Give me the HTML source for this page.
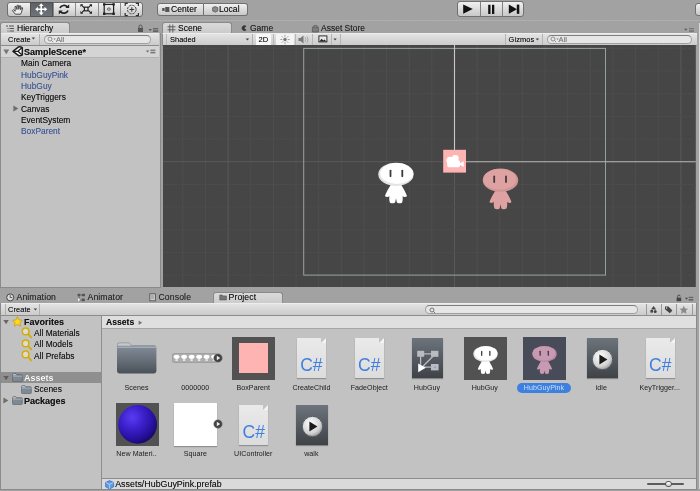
<!DOCTYPE html>
<html><head><meta charset="utf-8"><title>Unity</title>
<style>
*{box-sizing:border-box;margin:0;padding:0}
html,body{width:700px;height:491px;overflow:hidden;background:#a2a2a2}
body{font-family:"Liberation Sans",sans-serif;font-size:8.4px;color:#111;position:relative;-webkit-font-smoothing:antialiased}
.abs,div,span,svg{position:absolute}
.t{white-space:nowrap;line-height:12px;height:12px;text-shadow:0 0 .5px rgba(0,0,0,.45)}
.b{font-weight:bold;font-size:9px}
.blue{color:#3f5896;text-shadow:0 0 .5px rgba(63,88,150,.5)}
.btn{background:linear-gradient(#f0f0f0,#c8c8c8);border:1px solid #707070;}
.tab{background:linear-gradient(#dadada,#cbcbcb);border:1px solid #8a8a8a;border-bottom:none;border-radius:3px 3px 0 0}
.tbar{background:linear-gradient(#e3e3e3,#cbcbcb);border-top:1px solid #ededed;border-bottom:1px solid #8c8c8c}
.panel{background:#c2c2c2}
.search{background:#e6e6e6;border:1px solid #a0a0a0;border-top-color:#7e7e7e;border-radius:5px}
.lbl{font-size:7.1px;text-align:center;width:58px;line-height:10px;height:10px;letter-spacing:.05px;color:#1a1a1a}
.cs{background:linear-gradient(#eaeaea,#dcdcdc);box-shadow:0 1px 1px rgba(0,0,0,.25)}
.cs i{position:absolute;right:0;top:0;width:0;height:0;border-style:solid;border-width:0 0 5.500px 5.500px;border-color:transparent transparent #f4f4f4 #c2c2c2;}
.cs b{position:absolute;left:0;width:100%;text-align:center;top:17px;font-size:17.5px;line-height:20px;font-weight:normal;color:#3f7fdf}
.clip{background:linear-gradient(#6d747c,#50565c 60%,#3f4348);box-shadow:0 1px 1px rgba(0,0,0,.3)}
</style></head><body><div id="root" style="left:0;top:0;width:700px;height:491px;will-change:transform">

<div style="left:7px;top:1.5px;width:136px;height:15.5px;border-radius:3px;border:1px solid #6e6e6e;background:linear-gradient(#f2f2f2,#c8c8c8)"></div>
<div style="left:29.5px;top:1.5px;width:23.5px;height:15.5px;background:linear-gradient(#5c6168,#6e737a);border:1px solid #505050"></div>
<div style="left:53px;top:2.5px;width:1px;height:13.5px;background:#8a8a8a"></div>
<div style="left:75px;top:2.5px;width:1px;height:13.5px;background:#8a8a8a"></div>
<div style="left:97.5px;top:2.5px;width:1px;height:13.5px;background:#8a8a8a"></div>
<div style="left:120px;top:2.5px;width:1px;height:13.5px;background:#8a8a8a"></div>
<svg style="left:0;top:0" width="160" height="20" viewBox="0 0 160 20">
<g fill="none" stroke="#3a3a3a" stroke-width=".9">
<path d="M15.4 14.2 l-3-3.600 .9-.9 1.900 1.500 -.2-4.600 1.100-.3 .9 3.200 .1-4.200 1.200-.1 .5 4.100 .8-3.600 1.100.2 -.1 3.900 1.100-2.300 1 .4 -1.200 4.400 -.9 1.900 z" fill="#ececec"/>
</g>
<g fill="#fff" stroke="none">
<path d="M41.200 3.200 l2.400 2.700h-1.600v2.500h2.500v-1.600l2.700 2.400-2.700 2.400v-1.600h-2.500v2.500h1.600l-2.400 2.700-2.400-2.700h1.600v-2.500h-2.500v1.600l-2.700-2.400 2.700-2.400v1.600h2.500v-2.500h-1.600z"/>
</g>
<g fill="none" stroke="#222" stroke-width="1.700">
<path d="M60 8a4.200 3.400 0 0 1 7.400-1.200"/><path d="M68 10.600a4.200 3.400 0 0 1-7.400 1.200"/>
</g>
<path d="M69.200 4.200v3.800h-3.800z M58.800 14.400v-3.800h3.800z" fill="#222"/>
<g fill="none" stroke="#222" stroke-width="1.200">
<rect x="84.400" y="7.200" width="3.600" height="3.600"/>
<path d="M81.600 5.200l2.400 2.400M90.800 5.200l-2.400 2.400M81.600 12.800l2.400-2.400M90.800 12.800l-2.400-2.400"/>
</g>
<path d="M80.400 4.200h2.800l-2.800 2.800z M92 4.200h-2.800l2.800 2.800z M80.400 13.800h2.800l-2.800-2.800z M92 13.800h-2.800l2.800-2.800z" fill="#222"/>
<g fill="none" stroke="#222" stroke-width="1.200">
<rect x="104.200" y="4.400" width="9.400" height="9.400"/><ellipse cx="108.900" cy="9.100" rx="1.500" ry="1.200" stroke="#555" stroke-width=".9"/>
</g>
<path d="M103 3.200h2.400v2.400h-2.400z M112.400 3.200h2.400v2.400h-2.400z M103 12.600h2.400v2.400h-2.400z M112.400 12.600h2.400v2.400h-2.400z" fill="#222"/>
<g fill="none" stroke="#333" stroke-width="1.200">
<circle cx="131.800" cy="9.500" r="4.300" stroke-dasharray="2.400 1" stroke="#444" stroke-width="1"/>
<path d="M131.800 7.200v4.600M129.500 9.500h4.600" stroke-width="1"/>
<path d="M125.200 6v-2.600h2.600M138.400 6v-2.600h-2.600M125.200 13v2.600h2.600M138.400 13v2.600h-2.600"/>
</g>
</svg>
<div class="btn" style="left:157px;top:3px;width:46.5px;height:13px;border-radius:3px 0 0 3px"></div>
<div class="btn" style="left:203.500px;top:3px;width:44.300px;height:13px;border-radius:0 3px 3px 0;border-left:none"></div>
<svg style="left:160px;top:5px" width="60" height="10"><rect x="2.2" y="3" width="2.4" height="3" fill="#555"/><rect x="5.2" y="2" width="4.2" height="5" fill="#555"/><path d="M55.2 1.600l2.600 1v3.400l-2.600 1.200-2.600-1.200v-3.400z" fill="#8a8a8a" stroke="#555" stroke-width=".7"/></svg>
<span class="t" style="left:171px;top:4px;font-size:8.6px;line-height:11px">Center</span>
<span class="t" style="left:219px;top:4px;font-size:8.6px;line-height:11px">Local</span>
<div class="btn" style="left:457.3px;top:1.4px;width:67.2px;height:15.6px;border-radius:3px"></div>
<div style="left:479.8px;top:2.4px;width:1px;height:13.6px;background:#808080"></div><div style="left:502.3px;top:2.4px;width:1px;height:13.6px;background:#808080"></div>
<svg style="left:457px;top:1.4px" width="68" height="16"><path d="M6.2 3.4l9.6 4.700-9.600 4.700z" fill="#111"/><rect x="31.200" y="3.800" width="2.300" height="9.200" fill="#111"/><rect x="35" y="3.800" width="2.300" height="9.200" fill="#111"/><path d="M51.800 3.600l8.200 4.600-8.200 4.600z" fill="#111"/><rect x="59.800" y="3.600" width="2.500" height="9.200" fill="#111"/></svg>
<div class="btn" style="left:695px;top:3px;width:10px;height:13px;border-radius:3px"></div>
<div style="left:0;top:20px;width:700px;height:1px;background:repeating-linear-gradient(90deg,#b2b2b2 0 2px,#a8a8a8 2px 3px)"></div>
<div class="panel" style="left:0px;top:33px;width:160.600px;height:255px;border:1px solid #8a8a8a;border-top:none"></div>
<div class="tab" style="left:0px;top:22px;width:69.800px;height:11.300px"></div>
<svg style="left:5px;top:24px" width="10" height="9"><path d="M1 2h2M4 2h5M2.5 4.5h1M4.5 4.5h4.5M2.5 7h1M4.5 7h4.5" stroke="#555" stroke-width="1"/></svg>
<span class="t" style="left:17px;top:21.900px;font-size:8.500px">Hierarchy</span>
<svg style="left:136px;top:24px" width="26" height="10"><rect x="2" y="4" width="5" height="4" fill="#555"/><path d="M3 4v-1.5a1.5 1.5 0 0 1 3 0v1.5" fill="none" stroke="#555" stroke-width="1"/><path d="M12.5 5h3.4l-1.7 2z" fill="#555"/><rect x="17" y="4" width="5.2" height="1.4" fill="#666"/><rect x="17" y="6.2" width="5.2" height="1.8" fill="#666"/></svg>
<div class="tbar" style="left:1px;top:33px;width:158px;height:12.500px"></div>
<span class="t" style="left:8px;top:33.5px;font-size:7.4px;letter-spacing:.1px">Create</span>
<svg style="left:31px;top:37px" width="6" height="4"><path d="M.7 .6h3.400l-1.700 2z" fill="#444"/></svg>
<div style="left:38.5px;top:34px;width:1px;height:11px;background:#b0b0b0"></div>
<div class="search" style="left:44px;top:34.5px;width:107px;height:9.5px"></div>
<svg style="left:47px;top:36px" width="10" height="8"><circle cx="3" cy="3" r="2" fill="none" stroke="#888" stroke-width=".9"/><path d="M4.5 4.5l1.6 1.6" stroke="#888" stroke-width=".9"/><path d="M6.4 2.6h2.4l-1.2 1.4z" fill="#888"/></svg>
<span class="t" style="left:56px;top:33.5px;font-size:7.6px;color:#8e8e8e">All</span>
<div style="left:1px;top:45.500px;width:158px;height:12.800px;background:#d4d4d4;border-bottom:1px solid #b4b4b4"></div>
<svg style="left:2.5px;top:48.5px" width="8" height="8"><path d="M.4 .6h5.800l-2.900 5z" fill="#777"/></svg>
<svg style="left:11.500px;top:45.500px" width="12" height="11"><path d="M1 5.300 L6.600 .9 Q8.800 .6 10.300 1.600 L10.300 9 Q8.800 10 6.600 9.700 Z" fill="#fff" stroke="#1c1c1c" stroke-width="1.500" stroke-linejoin="round"/><path d="M1.200 5.300H6M6 5.300L9.800 1.800M6 5.300L9.800 8.800" stroke="#1c1c1c" stroke-width="1.300" fill="none"/></svg>
<span class="t b" style="left:24px;top:45.5px">SampleScene*</span>
<svg style="left:145px;top:49px" width="14" height="6"><path d="M1 1.4h3.2l-1.6 2z" fill="#666"/><rect x="5.4" y=".6" width="5" height="1.3" fill="#777"/><rect x="5.4" y="2.8" width="5" height="1.6" fill="#777"/></svg>
<span class="t" style="left:21px;top:57.2px">Main Camera</span>
<span class="t blue" style="left:21px;top:68.6px">HubGuyPink</span>
<span class="t blue" style="left:21px;top:79.9px">HubGuy</span>
<span class="t" style="left:21px;top:91.3px">KeyTriggers</span>
<span class="t" style="left:21px;top:102.6px">Canvas</span>
<svg style="left:13.200px;top:105.2px" width="7" height="8"><path d="M.4 .4v6.200l5-3.100z" fill="#6e6e6e"/></svg>
<span class="t" style="left:21px;top:114.0px">EventSystem</span>
<span class="t blue" style="left:21px;top:125.4px">BoxParent</span>
<div class="tab" style="left:162px;top:22.300px;width:69.500px;height:11px"></div>
<svg style="left:167px;top:24px" width="9" height="9"><path d="M2.8 .5v8M5.8 .5v8M.5 2.8h8M.5 5.8h8" stroke="#555" stroke-width=".9"/></svg>
<span class="t" style="left:178px;top:21.900px;font-size:8.500px">Scene</span>
<svg style="left:240.500px;top:24.800px" width="7" height="7"><path d="M5.400 1.200A2.700 2.700 0 1 0 5.400 5L3.200 3.100z" fill="#333"/></svg>
<span class="t" style="left:250px;top:21.900px;font-size:8.500px;color:#222">Game</span>
<svg style="left:311px;top:24px" width="9" height="9"><path d="M1.4 3.2h6v4.800h-6z" fill="#7c7c7c" stroke="#555" stroke-width=".7"/><path d="M2.8 3.2v-1.500h3.200v1.500" fill="none" stroke="#555" stroke-width=".8"/></svg>
<span class="t" style="left:321px;top:21.900px;font-size:8.500px;color:#222">Asset Store</span>
<svg style="left:683px;top:27px" width="14" height="6"><path d="M1.2 1.8h3.2l-1.6 2z" fill="#555"/><rect x="6" y="1" width="5" height="1.3" fill="#777"/><rect x="6" y="3.2" width="5" height="1.7" fill="#777"/></svg>
<div class="tbar" style="left:162px;top:33px;width:534.500px;height:12.500px;border-left:1px solid #8a8a8a"></div><div style="left:166px;top:34px;width:1px;height:11px;background:#b8b8b8"></div>
<span class="t" style="left:170px;top:33.500px;font-size:7.400px;letter-spacing:.05px">Shaded</span>
<svg style="left:245px;top:37.5px" width="6" height="4"><path d="M.7 .6h3.400l-1.700 2z" fill="#444"/></svg>
<div style="left:252px;top:34px;width:1px;height:11px;background:#b0b0b0"></div><div style="left:273.300px;top:34px;width:1px;height:11px;background:#b8b8b8"></div><div style="left:295.300px;top:34px;width:1px;height:11px;background:#b8b8b8"></div>
<div style="left:255.700px;top:33.600px;width:15.500px;height:11.200px;background:#f7f7f7"></div>
<span class="t" style="left:258.5px;top:33.5px;font-size:7.6px">2D</span>
<div style="left:276.300px;top:33.600px;width:17.400px;height:11.200px;background:#f4f4f4"></div>
<svg style="left:279px;top:34px" width="12" height="11"><circle cx="6" cy="5.5" r="1.7" fill="#777"/><path d="M6 .8v2M6 8.2v2M1.3 5.5h2M8.7 5.5h2M2.7 2.2l1.4 1.4M7.9 7.4l1.4 1.4M9.3 2.2l-1.4 1.4M4.1 7.4l-1.4 1.4" stroke="#888" stroke-width=".8"/></svg>
<svg style="left:297px;top:34px" width="14" height="11"><path d="M1.5 4h2l3-2.6v8.2l-3-2.6h-2z" fill="#777"/><path d="M8 3.4a3 3 0 0 1 0 4.2M9.6 2a5 5 0 0 1 0 7" fill="none" stroke="#999" stroke-width=".8"/></svg>
<div style="left:312.300px;top:34px;width:1px;height:11px;background:#b4b4b4"></div>
<svg style="left:317.500px;top:35.300px" width="11" height="9"><rect x=".9" y=".9" width="8" height="6" fill="#e8e8e8" stroke="#333" stroke-width="1"/><path d="M1.400 6.400l2.200-2.600 1.700 1.700 1.200-1 1.800 1.900z" fill="#222"/></svg>
<div style="left:330.5px;top:34px;width:1px;height:11px;background:#b4b4b4"></div>
<svg style="left:333.3px;top:38px" width="6" height="4"><path d="M.5 .5h3.2l-1.6 2z" fill="#444"/></svg>
<div style="left:339.500px;top:34px;width:1px;height:11px;background:#b4b4b4"></div>
<div style="left:504.5px;top:34px;width:1px;height:11px;background:#b4b4b4"></div>
<span class="t" style="left:508.5px;top:33.5px;font-size:7.4px;letter-spacing:.15px">Gizmos</span>
<svg style="left:535px;top:37.5px" width="6" height="4"><path d="M.7 .6h3.400l-1.700 2z" fill="#444"/></svg>
<div style="left:541.5px;top:34px;width:1px;height:11px;background:#b4b4b4"></div>
<div class="search" style="left:546.5px;top:34.5px;width:145px;height:9.5px"></div>
<svg style="left:549.5px;top:36px" width="10" height="8"><circle cx="3" cy="3" r="2" fill="none" stroke="#888" stroke-width=".9"/><path d="M4.5 4.5l1.6 1.6" stroke="#888" stroke-width=".9"/><path d="M6.4 2.6h2.4l-1.2 1.4z" fill="#888"/></svg>
<span class="t" style="left:558.5px;top:33.5px;font-size:7.6px;color:#8e8e8e">All</span>
<svg style="left:163px;top:45px" width="532.8" height="242.3" viewBox="163 45 532.8 242.3"><rect x="163" y="45" width="532.8" height="242.3" fill="#464646"/><path d="M182.82 45V287.3" stroke="#4e4e4e" stroke-width="1"/><path d="M205.46 45V287.3" stroke="#4e4e4e" stroke-width="1"/><path d="M228.10 45V287.3" stroke="#5a5a5a" stroke-width="1"/><path d="M250.74 45V287.3" stroke="#4e4e4e" stroke-width="1"/><path d="M273.38 45V287.3" stroke="#4e4e4e" stroke-width="1"/><path d="M296.02 45V287.3" stroke="#4e4e4e" stroke-width="1"/><path d="M318.66 45V287.3" stroke="#4e4e4e" stroke-width="1"/><path d="M341.30 45V287.3" stroke="#4e4e4e" stroke-width="1"/><path d="M363.94 45V287.3" stroke="#4e4e4e" stroke-width="1"/><path d="M386.58 45V287.3" stroke="#4e4e4e" stroke-width="1"/><path d="M409.22 45V287.3" stroke="#4e4e4e" stroke-width="1"/><path d="M431.86 45V287.3" stroke="#4e4e4e" stroke-width="1"/><path d="M454.50 45V287.3" stroke="#5a5a5a" stroke-width="1"/><path d="M477.14 45V287.3" stroke="#4e4e4e" stroke-width="1"/><path d="M499.78 45V287.3" stroke="#4e4e4e" stroke-width="1"/><path d="M522.42 45V287.3" stroke="#4e4e4e" stroke-width="1"/><path d="M545.06 45V287.3" stroke="#4e4e4e" stroke-width="1"/><path d="M567.70 45V287.3" stroke="#4e4e4e" stroke-width="1"/><path d="M590.34 45V287.3" stroke="#4e4e4e" stroke-width="1"/><path d="M612.98 45V287.3" stroke="#4e4e4e" stroke-width="1"/><path d="M635.62 45V287.3" stroke="#4e4e4e" stroke-width="1"/><path d="M658.26 45V287.3" stroke="#4e4e4e" stroke-width="1"/><path d="M680.90 45V287.3" stroke="#5a5a5a" stroke-width="1"/><path d="M163 48.30H695.8" stroke="#4e4e4e" stroke-width="1" stroke-dasharray="2.200 .8"/><path d="M163 70.98H695.8" stroke="#4e4e4e" stroke-width="1" stroke-dasharray="2.200 .8"/><path d="M163 93.66H695.8" stroke="#4e4e4e" stroke-width="1" stroke-dasharray="2.200 .8"/><path d="M163 116.34H695.8" stroke="#4e4e4e" stroke-width="1" stroke-dasharray="2.200 .8"/><path d="M163 139.02H695.8" stroke="#4e4e4e" stroke-width="1" stroke-dasharray="2.200 .8"/><path d="M163 161.70H695.8" stroke="#5a5a5a" stroke-width="1"/><path d="M163 184.38H695.8" stroke="#4e4e4e" stroke-width="1" stroke-dasharray="2.200 .8"/><path d="M163 207.06H695.8" stroke="#4e4e4e" stroke-width="1" stroke-dasharray="2.200 .8"/><path d="M163 229.74H695.8" stroke="#4e4e4e" stroke-width="1" stroke-dasharray="2.200 .8"/><path d="M163 252.42H695.8" stroke="#4e4e4e" stroke-width="1" stroke-dasharray="2.200 .8"/><path d="M163 275.10H695.8" stroke="#4e4e4e" stroke-width="1" stroke-dasharray="2.200 .8"/><rect x="303.700" y="48.400" width="301.800" height="226.700" fill="none" stroke="#97a1a4" stroke-width="1"/><path d="M454.5 45V150" stroke="#c9c9c9" stroke-width="1.1"/><path d="M466 161.7H695.8" stroke="#b4b4b4" stroke-width="1.1"/><rect x="443.2" y="149.8" width="22.8" height="22.8" fill="#ffb4b4"/><path d="M454.5 150v4" stroke="#d8c0c0" stroke-width="1"/><g fill="#fff"><circle cx="450" cy="160.3" r="3.6"/><circle cx="455.3" cy="158.3" r="3.4"/><rect x="447.2" y="160.2" width="12.8" height="7" rx="1.6"/><path d="M459.6 163.6l4.2-2.4v5.8l-4.2-2.2z"/></g><g transform="translate(396 174.3) scale(1.0 1.0)"><path d="M-4.6 9.5 C-6 12 -10.5 19 -11 22 C-9 23.4 -7.6 22.6 -6.6 21.6 C-7 24 -6.6 27 -6 28.4 C-4 29.4 -1.6 29 -0.8 28 L0 24 L0.8 28 C1.6 29 4 29.4 6 28.4 C6.6 27 7 24 6.6 21.6 C7.6 22.6 9 23.4 11 22 C10.5 19 6 12 4.6 9.5 Z" fill="#ffffff"/><ellipse cx="0" cy="0" rx="17.7" ry="11.6" fill="#e4e4e4"/><ellipse cx="0.8" cy="-0.8" rx="16.4" ry="10.4" fill="#ffffff"/><rect x="-6.400" y="-4.600" width="1.800" height="7.400" rx=".9" fill="#3a3a3a"/><rect x="5.4" y="-4.6" width="1.8" height="7.4" rx=".9" fill="#3a3a3a"/></g><g transform="translate(500.5 180.2) scale(-1.0 1.0)"><path d="M-4.6 9.5 C-6 12 -10.5 19 -11 22 C-9 23.4 -7.6 22.6 -6.6 21.6 C-7 24 -6.6 27 -6 28.4 C-4 29.4 -1.6 29 -0.8 28 L0 24 L0.8 28 C1.6 29 4 29.4 6 28.4 C6.6 27 7 24 6.6 21.6 C7.6 22.6 9 23.4 11 22 C10.5 19 6 12 4.6 9.5 Z" fill="#dfa2a2"/><ellipse cx="0" cy="0" rx="17.7" ry="11.6" fill="#cf9494"/><ellipse cx="0.8" cy="-0.8" rx="16.4" ry="10.4" fill="#dfa2a2"/><rect x="-6.400" y="-4.600" width="1.800" height="7.400" rx=".9" fill="#4a3838"/><rect x="5.4" y="-4.6" width="1.8" height="7.4" rx=".9" fill="#4a3838"/></g></svg>
<div style="left:698.7px;top:23px;width:2px;height:466px;background:#dadada"></div>
<div class="panel" style="left:0px;top:303px;width:697px;height:186.500px;border:1px solid #8a8a8a;border-top:none"></div>
<svg style="left:5.5px;top:292.5px" width="9" height="9"><circle cx="4.2" cy="4.4" r="3.5" fill="#ddd" stroke="#444" stroke-width="1"/><path d="M4.2 2.2v2.4h2" fill="none" stroke="#444" stroke-width=".9"/></svg>
<span class="t" style="left:16.5px;top:291px;font-size:8.700px;letter-spacing:.1px;color:#2a2a2a">Animation</span>
<svg style="left:77px;top:292.5px" width="9" height="9"><rect x=".6" y=".8" width="2.6" height="2.4" fill="#555"/><rect x="5" y=".8" width="3" height="2.4" fill="#555"/><rect x="4.6" y="5.6" width="3.2" height="2.6" fill="#555"/><path d="M2 3v4l2.4 0M3 2h2" stroke="#555" stroke-width=".8" fill="none"/><path d="M1 5l2.4 1.8-2.4 1.6z" fill="#eee"/></svg>
<span class="t" style="left:87.5px;top:291px;font-size:8.700px;letter-spacing:.1px;color:#2a2a2a">Animator</span>
<svg style="left:149px;top:292.5px" width="8" height="9"><rect x=".8" y=".8" width="5.6" height="7" fill="#ccc" stroke="#555" stroke-width=".9"/><path d="M2 3h3M2 5h3" stroke="#777" stroke-width=".7"/></svg>
<span class="t" style="left:158.5px;top:291px;font-size:8.700px;letter-spacing:.1px;color:#2a2a2a">Console</span>
<div class="tab" style="left:213px;top:291.5px;width:69.5px;height:12px"></div>
<svg style="left:219px;top:293.500px" width="8" height="7" viewBox="0 0 9 8"><path d="M.8 1.2h2.800l.8 1h4v4.600h-7.600z" fill="#777" stroke="#555" stroke-width=".7"/></svg>
<span class="t" style="left:228.5px;top:291px;font-size:8.700px;letter-spacing:.1px">Project</span>
<svg style="left:675px;top:294px" width="22" height="9"><rect x="1.6" y="3.6" width="4.6" height="3.6" fill="#444"/><path d="M2.6 3.6v-1.2a1.3 1.3 0 0 1 2.6 0" fill="none" stroke="#444" stroke-width=".9"/><path d="M10 3.8h3l-1.5 1.9z" fill="#444"/><rect x="13.6" y="2.8" width="4.6" height="1.3" fill="#666"/><rect x="13.6" y="5" width="4.6" height="1.7" fill="#666"/></svg>
<div class="tbar" style="left:1px;top:303px;width:695px;height:13px"></div>
<div style="left:4.5px;top:304px;width:1px;height:11px;background:#b0b0b0"></div>
<span class="t" style="left:8px;top:303.8px;font-size:7.4px;letter-spacing:.1px">Create</span>
<svg style="left:32.5px;top:307.5px" width="6" height="4"><path d="M.7 .6h3.400l-1.700 2z" fill="#444"/></svg>
<div style="left:39px;top:304px;width:1px;height:11px;background:#b0b0b0"></div>
<div class="search" style="left:425px;top:304.8px;width:213px;height:9.5px"></div>
<svg style="left:428.5px;top:306.5px" width="8" height="8"><circle cx="3" cy="3" r="2" fill="none" stroke="#666" stroke-width=".9"/><path d="M4.5 4.5l1.6 1.6" stroke="#666" stroke-width=".9"/></svg>
<div style="left:646px;top:304px;width:1px;height:11px;background:#9a9a9a"></div>
<div style="left:661px;top:304px;width:1px;height:11px;background:#9a9a9a"></div>
<div style="left:676.3px;top:304px;width:1px;height:11px;background:#9a9a9a"></div>
<div style="left:692px;top:304px;width:1px;height:11px;background:#9a9a9a"></div>
<svg style="left:646px;top:304px" width="46" height="11"><g fill="#444"><path d="M7.6 2l2.6 3.6h-5.2z"/><rect x="4.4" y="6" width="2.6" height="2.6"/><circle cx="9.2" cy="7.4" r="1.5"/></g><path d="M19 2.4h3.4l4 4-2.6 2.8-4.8-4z" fill="#444"/><circle cx="20.6" cy="4" r=".7" fill="#ddd"/><path d="M37.8 1.8l1.3 2.6 2.9.4-2.1 2 .5 2.9-2.6-1.4-2.6 1.4.5-2.9-2.1-2 2.9-.4z" fill="#8a8a8a"/></svg>
<div style="left:100.5px;top:316px;width:1px;height:173px;background:#8e8e8e"></div>
<div style="left:1px;top:372.200px;width:99.500px;height:10.800px;background:#8f8f8f"></div>
<svg style="left:2.5px;top:318.6px" width="7" height="7"><path d="M.4 1h5.4l-2.7 4.2z" fill="#666"/></svg>
<svg style="left:12.300px;top:316.200px" width="11" height="11" viewBox="0 0 12 12"><path d="M6 .8l1.6 3.5 3.8.4-2.8 2.6.8 3.8L6 9.2 2.6 11.1l.8-3.8L.6 4.700l3.800-.4z" fill="#ffd820" stroke="#c79a0a" stroke-width=".8"/></svg>
<span class="t b" style="left:24px;top:315.5px">Favorites</span>
<svg style="left:21px;top:327.2px" width="12" height="12"><circle cx="4.600" cy="4.400" r="3.300" fill="#dcdcd4" stroke="#d4ae08" stroke-width="1.500"/><path d="M7.200 7.200l3 3.200" stroke="#d4ae08" stroke-width="1.900" stroke-linecap="round"/></svg>
<span class="t" style="left:34px;top:327.0px">All Materials</span>
<svg style="left:21px;top:338.65px" width="12" height="12"><circle cx="4.600" cy="4.400" r="3.300" fill="#dcdcd4" stroke="#d4ae08" stroke-width="1.500"/><path d="M7.200 7.200l3 3.200" stroke="#d4ae08" stroke-width="1.900" stroke-linecap="round"/></svg>
<span class="t" style="left:34px;top:338.4px">All Models</span>
<svg style="left:21px;top:350.09999999999997px" width="12" height="12"><circle cx="4.600" cy="4.400" r="3.300" fill="#dcdcd4" stroke="#d4ae08" stroke-width="1.500"/><path d="M7.200 7.200l3 3.200" stroke="#d4ae08" stroke-width="1.900" stroke-linecap="round"/></svg>
<span class="t" style="left:34px;top:349.9px">All Prefabs</span>
<svg style="left:2.5px;top:374.8px" width="7" height="7"><path d="M.4 1h5.4l-2.7 4.2z" fill="#5e5e5e"/></svg>
<svg style="left:11.5px;top:373.2px" width="11" height="9"><path d="M.5 1.6q0-.9.9-.9h2.6l.9 1h4.6q.8 0 .8.8v5.3q0 .7-.8.7h-8.2q-.8 0-.8-.7z" fill="#7f8993" stroke="#565c64" stroke-width=".6"/><path d="M.9 1.300h2.800l.8 1h-3.600z" fill="#c9ced3"/><path d="M.8 3.200h9.600" stroke="#b6bec6" stroke-width=".7"/></svg>
<span class="t b" style="left:24px;top:371.6px;color:#fff">Assets</span>
<svg style="left:20.8px;top:384.8px" width="11" height="9"><path d="M.5 1.6q0-.9.9-.9h2.6l.9 1h4.6q.8 0 .8.8v5.3q0 .7-.8.7h-8.2q-.8 0-.8-.7z" fill="#7f8993" stroke="#565c64" stroke-width=".6"/><path d="M.9 1.300h2.800l.8 1h-3.600z" fill="#c9ced3"/><path d="M.8 3.200h9.600" stroke="#b6bec6" stroke-width=".7"/></svg>
<span class="t" style="left:34px;top:383.4px">Scenes</span>
<svg style="left:3.2px;top:397.3px" width="7" height="8"><path d="M.4 .4v6.200l5-3.100z" fill="#6e6e6e"/></svg>
<svg style="left:11.5px;top:396.2px" width="11" height="9"><path d="M.5 1.6q0-.9.9-.9h2.6l.9 1h4.6q.8 0 .8.8v5.3q0 .7-.8.7h-8.2q-.8 0-.8-.7z" fill="#7f8993" stroke="#565c64" stroke-width=".6"/><path d="M.9 1.300h2.800l.8 1h-3.600z" fill="#c9ced3"/><path d="M.8 3.200h9.600" stroke="#b6bec6" stroke-width=".7"/></svg>
<span class="t b" style="left:24px;top:394.8px">Packages</span>
<div style="left:101.500px;top:316.400px;width:594.500px;height:12.300px;background:#dfdfdf;border-bottom:1px solid #a6a6a6"></div>
<span class="t b" style="left:106px;top:316.200px;font-size:8.600px">Assets</span>
<svg style="left:137.500px;top:320.100px" width="6" height="6"><path d="M.6 .6v4.400l3.600-2.200z" fill="#777"/></svg>
<svg style="left:116px;top:341px" width="42" height="35" viewBox="0 0 42 35"><defs><linearGradient id="fg" x1="0" y1="0" x2="0" y2="1"><stop offset="0" stop-color="#8a949e"/><stop offset=".5" stop-color="#6b747e"/><stop offset="1" stop-color="#4a5058"/></linearGradient></defs>
<path d="M1 4q0-2.400 2.400-2.400h9.600l2.600 2.600h22.400q2.400 0 2.400 2.400v23.400q0 2.400-2.400 2.400h-34.600q-2.400 0-2.400-2.400z" fill="url(#fg)"/><path d="M1.600 4q0-1.800 1.800-1.800h9.400l2.600 2.600h-13.800z" fill="#c8c8c8"/><path d="M1.400 6.200h39" stroke="#b4bcc4" stroke-width="1"/></svg>
<span class="lbl" style="left:107.5px;top:382.8px">Scenes</span>
<div style="left:172.3px;top:353.4px;width:45px;height:9.4px;background:#adadad;border:1px solid #a0a0a0;border-radius:1.5px"></div>
<svg style="left:172.3px;top:353.4px" width="46" height="10"><ellipse cx="4.6" cy="3.8" rx="2.9" ry="2.1" fill="#fff"/><rect x="3.4" y="6.3" width="2.4" height="1.5" fill="#f4f4f4"/><ellipse cx="12.1" cy="3.8" rx="2.9" ry="2.1" fill="#fff"/><rect x="10.9" y="6.3" width="2.4" height="1.5" fill="#f4f4f4"/><ellipse cx="19.6" cy="3.8" rx="2.9" ry="2.1" fill="#fff"/><rect x="18.4" y="6.3" width="2.4" height="1.5" fill="#f4f4f4"/><ellipse cx="27.1" cy="3.8" rx="2.9" ry="2.1" fill="#fff"/><rect x="25.9" y="6.3" width="2.4" height="1.5" fill="#f4f4f4"/><ellipse cx="34.6" cy="3.8" rx="2.9" ry="2.1" fill="#fff"/><rect x="33.4" y="6.3" width="2.4" height="1.5" fill="#f4f4f4"/><ellipse cx="42.1" cy="3.8" rx="2.9" ry="2.1" fill="#fff"/><rect x="40.9" y="6.3" width="2.4" height="1.5" fill="#f4f4f4"/></svg>
<svg style="left:213px;top:353px" width="10" height="10"><circle cx="5" cy="5" r="4.300" fill="#424242" stroke="#8a8a8a" stroke-width=".5"/><path d="M3.800 2.800l3.400 2.200-3.400 2.200z" fill="#eee"/></svg>
<span class="lbl" style="left:166.3px;top:382.8px">0000000</span>
<div style="left:232.4px;top:336.5px;width:42.6px;height:43.5px;background:#525252"></div>
<div style="left:238.9px;top:343.4px;width:29.6px;height:29.6px;background:#ffb4b4"></div>
<span class="lbl" style="left:224.3px;top:382.8px">BoxParent</span>
<div class="cs" style="left:296.79999999999995px;top:338px;width:29.2px;height:40px"><i></i><b>C#</b></div>
<span class="lbl" style="left:282.4px;top:382.8px">CreateChild</span>
<div class="cs" style="left:354.7px;top:338px;width:29.2px;height:40px"><i></i><b>C#</b></div>
<span class="lbl" style="left:340.3px;top:382.8px">FadeObject</span>
<div class="clip" style="left:411.8px;top:337.8px;width:31.6px;height:40.2px"></div>
<svg style="left:411.8px;top:337.8px" width="32" height="41"><g fill="#b9bcc0"><rect x="5.200" y="12.800" width="7" height="6"/><rect x="19" y="12.800" width="7.400" height="6"/><rect x="19" y="26" width="7.600" height="6.400"/></g><path d="M12 15.800h7M8.600 18.800v8M10 29.200l12-12M12 29.200h7" stroke="#b9bcc0" stroke-width="1.300" fill="none"/><path d="M6.200 25.600l7.600 4.200-7.600 4.400z" fill="#fff"/><circle cx="23" cy="29.200" r=".7" fill="#5a8adf"/></svg>
<span class="lbl" style="left:398px;top:382.8px">HubGuy</span>
<div style="left:464.3px;top:336.6px;width:42.8px;height:43px;background:#525252"></div>
<svg style="left:464.3px;top:336.600px" width="43" height="43" viewBox="464.3 336.6 43 43"><g transform="translate(485.8 353.6) scale(0.69 0.69)"><path d="M-4.6 9.5 C-6 12 -10.5 19 -11 22 C-9 23.4 -7.6 22.6 -6.6 21.6 C-7 24 -6.6 27 -6 28.4 C-4 29.4 -1.6 29 -0.8 28 L0 24 L0.8 28 C1.6 29 4 29.4 6 28.4 C6.6 27 7 24 6.6 21.6 C7.6 22.6 9 23.4 11 22 C10.5 19 6 12 4.6 9.5 Z" fill="#ffffff"/><ellipse cx="0" cy="0" rx="17.7" ry="11.6" fill="#e6e6e6"/><ellipse cx="0.8" cy="-0.8" rx="16.4" ry="10.4" fill="#ffffff"/><rect x="-6.400" y="-4.600" width="1.800" height="7.400" rx=".9" fill="#333"/><rect x="5.4" y="-4.6" width="1.8" height="7.4" rx=".9" fill="#333"/></g></svg>
<span class="lbl" style="left:455.8px;top:382.8px">HubGuy</span>
<div style="left:522.9px;top:336.6px;width:42.8px;height:43px;background:#474c58"></div>
<svg style="left:522.9px;top:336.600px" width="43" height="43" viewBox="522.9 336.6 43 43"><g transform="translate(544.4 353.5) scale(-0.69 0.69)"><path d="M-4.6 9.5 C-6 12 -10.5 19 -11 22 C-9 23.4 -7.6 22.6 -6.6 21.6 C-7 24 -6.6 27 -6 28.4 C-4 29.4 -1.6 29 -0.8 28 L0 24 L0.8 28 C1.6 29 4 29.4 6 28.4 C6.6 27 7 24 6.6 21.6 C7.6 22.6 9 23.4 11 22 C10.5 19 6 12 4.6 9.5 Z" fill="#c89ab2"/><ellipse cx="0" cy="0" rx="17.7" ry="11.6" fill="#b88aa4"/><ellipse cx="0.8" cy="-0.8" rx="16.4" ry="10.4" fill="#c89ab2"/><rect x="-6.400" y="-4.600" width="1.800" height="7.400" rx=".9" fill="#3a3040"/><rect x="5.4" y="-4.6" width="1.8" height="7.4" rx=".9" fill="#3a3040"/></g></svg>
<div style="left:517px;top:382.6px;width:54px;height:10.4px;border-radius:5.2px;background:#3d80df"></div>
<span class="lbl" style="left:515px;top:382.8px;color:#cfdff8">HubGuyPink</span>
<div class="clip" style="left:586.8000000000001px;top:337.8px;width:31.6px;height:40.2px"></div>
<svg style="left:591.1px;top:348.3px" width="23" height="23"><defs><radialGradient id="pg602337" cx=".4" cy=".35" r=".7"><stop offset="0" stop-color="#fff"/><stop offset=".7" stop-color="#d2d2d2"/><stop offset="1" stop-color="#8c8c8c"/></radialGradient></defs><circle cx="11.5" cy="11.5" r="10.2" fill="url(#pg602337)" stroke="#555b61" stroke-width="1"/><path d="M8.400 6.400l8 5.100-8 5.100z" fill="#1a1a1a"/></svg>
<span class="lbl" style="left:572.3px;top:382.8px">idle</span>
<div class="cs" style="left:645.6px;top:338px;width:29.2px;height:40px"><i></i><b>C#</b></div>
<span class="lbl" style="left:630.8px;top:382.8px">KeyTrigger...</span>
<div style="left:115.8px;top:402.7px;width:43.3px;height:43px;background:#525252"></div>
<svg style="left:115.8px;top:402.700px" width="44" height="43"><defs><radialGradient id="sg" cx=".36" cy=".32" r=".72"><stop offset="0" stop-color="#5a3cf0"/><stop offset=".45" stop-color="#3a1ec8"/><stop offset=".8" stop-color="#260f98"/><stop offset="1" stop-color="#180868"/></radialGradient></defs><circle cx="21.600" cy="21.400" r="19.400" fill="url(#sg)"/></svg>
<span class="lbl" style="left:107.5px;top:449.09999999999997px">New Materi..</span>
<div style="left:173.7px;top:402.7px;width:43.7px;height:43.3px;background:#fff;box-shadow:0 1px 1px rgba(0,0,0,.25)"></div>
<svg style="left:212.7px;top:418.8px" width="10" height="10"><circle cx="5" cy="5" r="4.300" fill="#424242" stroke="#8a8a8a" stroke-width=".5"/><path d="M3.800 2.800l3.400 2.200-3.400 2.200z" fill="#eee"/></svg>
<span class="lbl" style="left:166.3px;top:449.09999999999997px">Square</span>
<div class="cs" style="left:239.10000000000002px;top:404.5px;width:29.2px;height:40px"><i></i><b>C#</b></div>
<span class="lbl" style="left:224.3px;top:449.09999999999997px">UIController</span>
<div class="clip" style="left:296.2px;top:404.5px;width:31.6px;height:40.2px"></div>
<svg style="left:300.5px;top:415.0px" width="23" height="23"><defs><radialGradient id="pg312404" cx=".4" cy=".35" r=".7"><stop offset="0" stop-color="#fff"/><stop offset=".7" stop-color="#d2d2d2"/><stop offset="1" stop-color="#8c8c8c"/></radialGradient></defs><circle cx="11.5" cy="11.5" r="10.2" fill="url(#pg312404)" stroke="#555b61" stroke-width="1"/><path d="M8.400 6.400l8 5.100-8 5.100z" fill="#1a1a1a"/></svg>
<span class="lbl" style="left:282.4px;top:449.09999999999997px">walk</span>
<div style="left:101.5px;top:478px;width:594.5px;height:11px;background:#dadada;border-top:1px solid #8c8c8c"></div>
<svg style="left:104.5px;top:479.5px" width="10" height="10"><path d="M4.600 .6l4 1.800v4.400l-4 2.200-4-2.200v-4.400z" fill="#5a9ae8" stroke="#2a5aa8" stroke-width=".6"/><path d="M4.600 4.400v4.400M.8 2.500l3.800 1.900 3.800-1.900" stroke="#cfe2ff" stroke-width=".7" fill="none"/></svg>
<span class="t" style="left:115.2px;top:477.6px;font-size:8.9px">Assets/HubGuyPink.prefab</span>
<div style="left:646.5px;top:482.8px;width:37.5px;height:2px;background:#5c5c5c;border-radius:1px"></div>
<div style="left:665.3px;top:480.5px;width:6.600px;height:6.600px;border-radius:50%;background:linear-gradient(#fff,#ccc);border:1px solid #555"></div>
</div></body></html>
